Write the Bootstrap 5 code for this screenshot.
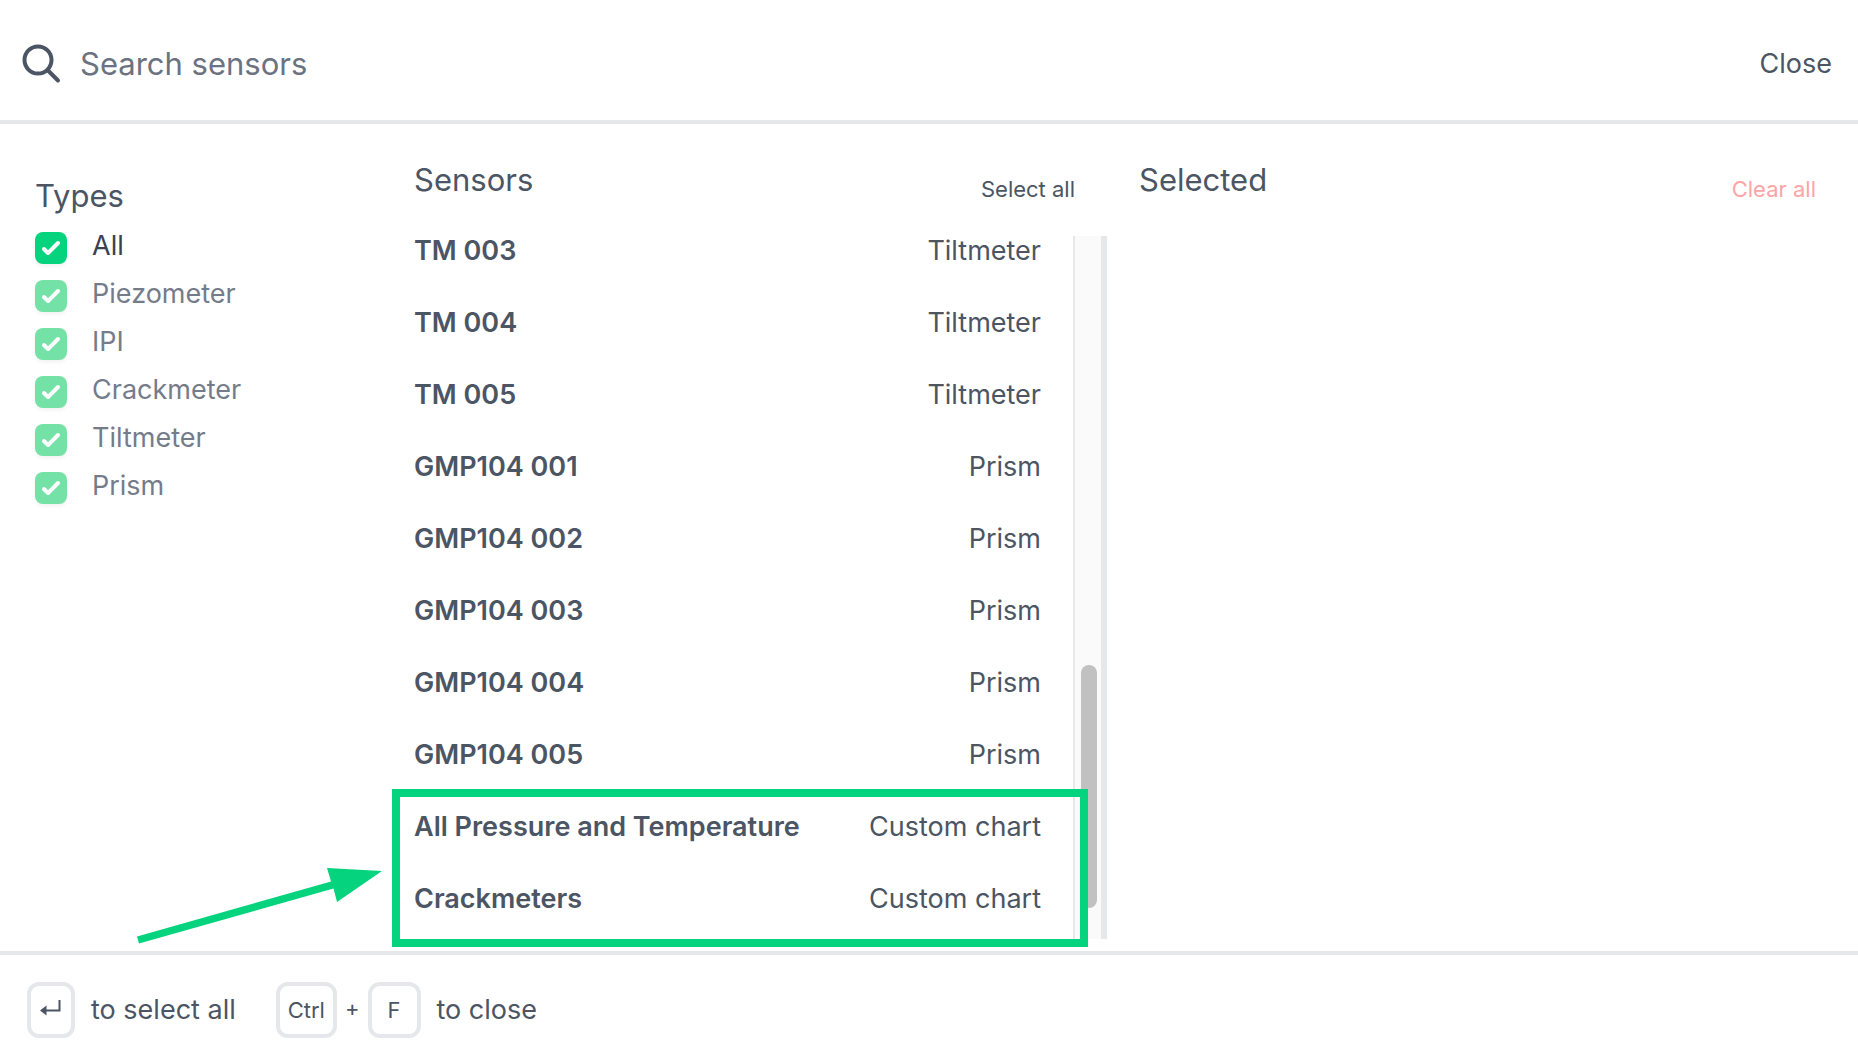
<!DOCTYPE html>
<html lang="en">
<head>
<meta charset="utf-8">
<meta name="viewport" content="width=device-width, initial-scale=1">
<title>Search sensors</title>
<link href="https://cdn.jsdelivr.net/npm/bootstrap@5.3.0/dist/css/bootstrap.min.css" rel="stylesheet">
<style>
  :root { --ink: #4b5563; --line: #e5e7eb; --accent: #05d37e; }
  body { font-family: Inter, "Liberation Sans", sans-serif; font-size: 27px; line-height: 32px; color: var(--ink); background: #fff; }
  .topbar { height: 124px; padding: 8px 26px 0 20px; border-bottom: 4px solid var(--line); }
  .search-field { font-size: 31px; line-height: 40px; padding: 0; border: 0; color: var(--ink); background: none; outline: 0; }
  .search-field::placeholder { color: #6b7280; opacity: 1; }
  .plain-btn { border: 0; padding: 0; background: none; color: var(--ink); }
  .small-btn { font-size: 22px; line-height: 32px; }
  .clear-btn, .clear-btn:disabled { color: #fca5a5; }
  .panes { display: grid; grid-template-columns: 382fr 725fr 751fr; min-height: 0; }
  .pane { min-width: 0; min-height: 0; }
  .types-pane { padding: 52px 32px 0 35px; }
  .sensors-pane { padding: 36px 0 12px 32px; }
  .selected-pane { padding: 36px 42px 12px 32px; }
  .pane-title { font-size: 31px; line-height: 40px; font-weight: 400; margin: 0; }
  .pane-head { height: 76px; }
  .pane-head .small-btn { margin-top: 13px; }
  .type-row { height: 48px; gap: 25px; color: #757c89; }
  .type-row.is-active { color: #374151; }
  .type-row label { padding-bottom: 4px; }
  .type-row .form-check-input { width: 32px; height: 32px; margin: 0; border: 0; border-radius: 8px; opacity: 1; box-shadow: 0 2px 4px rgba(0,0,0,.06); }
  .type-row .form-check-input:checked { background-color: #74e1a7; background-size: 100% 100%;
    background-image: url("data:image/svg+xml,%3csvg viewBox='0 0 16 16' fill='white' xmlns='http://www.w3.org/2000/svg'%3e%3cpath d='M12.207 4.793a1 1 0 010 1.414l-5 5a1 1 0 01-1.414 0l-2-2a1 1 0 011.414-1.414L6.5 9.086l4.293-4.293a1 1 0 011.414 0z'/%3e%3c/svg%3e"); }
  .type-row.is-active .form-check-input:checked { background-color: var(--accent); }
  .sensor-area { min-height: 0; border-right: 4px solid var(--line); }
  .sensor-list { min-height: 0; margin-top: -24px; padding: 0 32px 4px 0; }
  .sensor-row { height: 72px; flex-shrink: 0; }
  .sensor-name { font-weight: 600; }
  .scroll-track { width: 30px; padding: 0 6px; background: #fafafa; border: solid #e8e8e8; border-width: 0 2px; display: grid; grid-template-rows: 430fr 243fr 31fr; }
  .scroll-thumb { grid-row: 2; width: 16px; border-radius: 8px; background: #c1c1c1; }
  .callout-box { left: -22px; right: 15px; bottom: -8px; height: 158px; border: 8px solid var(--accent); pointer-events: none; }
  .callout-arrow { bottom: -6px; margin-right: 32px; pointer-events: none; }
  .hints { height: 111px; padding: 3px 27px 0; border-top: 4px solid var(--line); }
  .keycap { height: 56px; border: 4px solid var(--line); border-radius: 12px; background: #fff; color: var(--ink); font: 400 22px/32px Inter, "Liberation Sans", sans-serif; padding: 0 8px; }
  .keycap-enter { padding: 0 4px; }
  .keycap-f { padding: 0 16px; }
  .key-plus { font-size: 22px; padding-bottom: 4px; }
  .hint-group { margin-left: 40px; }
</style>
<script src="https://cdn.jsdelivr.net/npm/bootstrap@5.3.0/dist/js/bootstrap.bundle.min.js"></script>
</head>
<body class="vh-100 d-flex flex-column overflow-hidden">
<header class="topbar d-flex align-items-center flex-shrink-0">
  <svg class="flex-shrink-0" width="44" height="44" viewBox="0 0 44 44" fill="none" stroke="#4b5563" stroke-width="4" stroke-linecap="round" aria-hidden="true"><circle cx="18" cy="18" r="13.5"/><path d="M28 28.500 38 38.500"/></svg>
  <input class="search-field flex-grow-1 ms-3" type="text" placeholder="Search sensors" aria-label="Search sensors">
  <button type="button" class="plain-btn">Close</button>
</header>

<main class="panes flex-grow-1">
  <section class="pane types-pane">
    <h2 class="pane-title mb-2">Types</h2>
    <div class="type-row is-active d-flex align-items-center"><input class="form-check-input" type="checkbox" id="t-all" checked><label for="t-all">All</label></div>
    <div class="type-row d-flex align-items-center"><input class="form-check-input" type="checkbox" id="t-piezo" checked><label for="t-piezo">Piezometer</label></div>
    <div class="type-row d-flex align-items-center"><input class="form-check-input" type="checkbox" id="t-ipi" checked><label for="t-ipi">IPI</label></div>
    <div class="type-row d-flex align-items-center"><input class="form-check-input" type="checkbox" id="t-crack" checked><label for="t-crack">Crackmeter</label></div>
    <div class="type-row d-flex align-items-center"><input class="form-check-input" type="checkbox" id="t-tilt" checked><label for="t-tilt">Tiltmeter</label></div>
    <div class="type-row d-flex align-items-center"><input class="form-check-input" type="checkbox" id="t-prism" checked><label for="t-prism">Prism</label></div>
  </section>

  <section class="pane sensors-pane d-flex flex-column">
    <div class="pane-head d-flex justify-content-between align-items-start flex-shrink-0">
      <h2 class="pane-title">Sensors</h2>
      <button type="button" class="plain-btn small-btn me-4 pe-2">Select all</button>
    </div>
    <div class="sensor-area position-relative d-flex flex-grow-1">
      <div class="sensor-list d-flex flex-column justify-content-end flex-grow-1 overflow-hidden">
        <button type="button" class="plain-btn sensor-row d-flex justify-content-between align-items-center"><span class="sensor-name">TM 003</span><span>Tiltmeter</span></button>
        <button type="button" class="plain-btn sensor-row d-flex justify-content-between align-items-center"><span class="sensor-name">TM 004</span><span>Tiltmeter</span></button>
        <button type="button" class="plain-btn sensor-row d-flex justify-content-between align-items-center"><span class="sensor-name">TM 005</span><span>Tiltmeter</span></button>
        <button type="button" class="plain-btn sensor-row d-flex justify-content-between align-items-center"><span class="sensor-name">GMP104 001</span><span>Prism</span></button>
        <button type="button" class="plain-btn sensor-row d-flex justify-content-between align-items-center"><span class="sensor-name">GMP104 002</span><span>Prism</span></button>
        <button type="button" class="plain-btn sensor-row d-flex justify-content-between align-items-center"><span class="sensor-name">GMP104 003</span><span>Prism</span></button>
        <button type="button" class="plain-btn sensor-row d-flex justify-content-between align-items-center"><span class="sensor-name">GMP104 004</span><span>Prism</span></button>
        <button type="button" class="plain-btn sensor-row d-flex justify-content-between align-items-center"><span class="sensor-name">GMP104 005</span><span>Prism</span></button>
        <button type="button" class="plain-btn sensor-row d-flex justify-content-between align-items-center"><span class="sensor-name">All Pressure and Temperature</span><span>Custom chart</span></button>
        <button type="button" class="plain-btn sensor-row d-flex justify-content-between align-items-center"><span class="sensor-name">Crackmeters</span><span>Custom chart</span></button>
      </div>
      <div class="scroll-track flex-shrink-0"><div class="scroll-thumb"></div></div>
      <div class="callout-box position-absolute"></div>
      <svg class="callout-arrow position-absolute end-100" width="246" height="78" viewBox="136 868 246 78" aria-hidden="true"><path fill="#05d37e" d="M137 937.500 331 882.500 327 869 382 872 337 903 333.500 889.500 139 944.500Z"/></svg>
    </div>
  </section>

  <section class="pane selected-pane">
    <div class="pane-head d-flex justify-content-between align-items-start">
      <h2 class="pane-title">Selected</h2>
      <button type="button" class="plain-btn small-btn clear-btn" disabled>Clear all</button>
    </div>
  </section>
</main>

<footer class="hints d-flex align-items-center flex-shrink-0">
  <button type="button" class="keycap keycap-enter d-flex align-items-center" aria-label="Enter"><svg width="32" height="32" viewBox="0 0 32 32" aria-hidden="true"><path d="M24.500 6v10.500H10" fill="none" stroke="#4b5563" stroke-width="2"/><path d="M5 16.500 11.500 11.500v10Z" fill="#4b5563"/></svg></button>
  <span class="ms-3">to select all</span>
  <div class="hint-group d-flex align-items-center">
    <button type="button" class="keycap">Ctrl</button><span class="key-plus mx-2">+</span><button type="button" class="keycap keycap-f">F</button>
    <span class="ms-3">to close</span>
  </div>
</footer>
</body>
</html>
